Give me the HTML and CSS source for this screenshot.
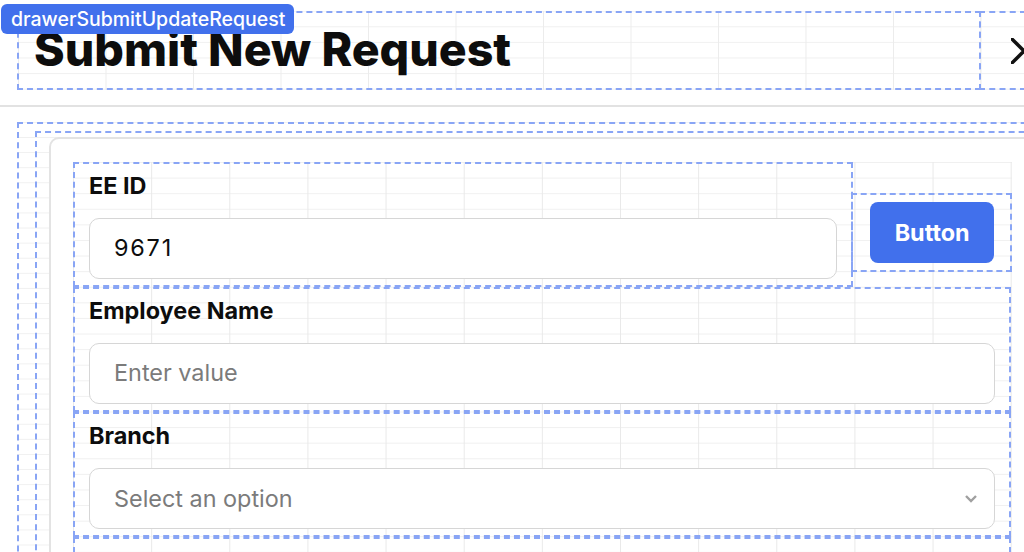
FILE: index.html
```html
<!DOCTYPE html>
<html lang="en">
<head>
    <meta charset="UTF-8">
    <title>Submit New Request</title>
    <link rel="stylesheet" href="styles.css">
</head>
<body>
    <div class="page">
        <div class="drawer-header">
            <div class="title-box">
                <h1>Submit New Request</h1>
            </div>
            <div class="close-box">
                <svg class="close-icon" width="26" height="26" viewBox="0 0 26 26">
                    <path d="M1 1 L25 25 M25 1 L1 25" stroke="#111" stroke-width="3.4" fill="none" stroke-linecap="square"/>
                </svg>
            </div>
            <span class="component-tag">drawerSubmitUpdateRequest</span>
        </div>

        <div class="drawer-body">
            <div class="outer-frame">
                <div class="inner-frame">
                    <div class="card">
                        <div class="grid">
                            <div class="row">
                                <div class="field field-short">
                                    <label>EE ID</label>
                                    <div class="input value">9671</div>
                                </div>
                                <div class="button-box">
                                    <button>Button</button>
                                </div>
                            </div>
                            <div class="field">
                                <label>Employee Name</label>
                                <div class="input placeholder">Enter value</div>
                            </div>
                            <div class="field">
                                <label>Branch</label>
                                <div class="input placeholder select">
                                    <span>Select an option</span>
                                    <svg class="chevron" width="14" height="9" viewBox="0 0 14 9">
                                        <path d="M2 2 L7 7 L12 2" stroke="#a0a0a0" stroke-width="2.4" fill="none"/>
                                    </svg>
                                </div>
                            </div>
                            <div class="field"></div>
                        </div>
                    </div>
                </div>
            </div>
        </div>
    </div>
</body>
</html>
```

FILE: styles.css
```css
* {
    box-sizing: border-box;
}
body {
    margin: 0;
    background-color: #fff;
    font-family: Inter, "Noto Sans", sans-serif;
    color: #0d0d0d;
}
.page {
    width: 1024px;
    height: 552px;
    overflow: hidden;
}
.drawer-header {
    position: relative;
    display: flex;
    height: 107px;
    padding: 11px 0 0 17px;
    border-bottom: 2px solid #e2e2e2;
}
.title-box,
.close-box {
    height: 79px;
    border: 2px dashed #89a5f5;
    background-image:
        linear-gradient(to right, #ececec 1px, transparent 1px),
        linear-gradient(to bottom, #f0f0f0 1px, transparent 1px);
    background-size: 87.5px 100%, 100% 15.6px;
    background-position: -1px 0, 0 13.3px;
}
.title-box {
    flex: 0 0 964px;
    padding: 13px 0 0 15px;
}
.title-box h1 {
    margin: 0;
    font-size: 46.5px;
    font-weight: 800;
    line-height: 1;
}
.close-box {
    flex: 0 0 88px;
    margin-left: -2px;
    display: flex;
    align-items: center;
    justify-content: center;
}
.close-icon {
    margin: 0 0 0 2px;
}
.component-tag {
    position: absolute;
    left: 1px;
    top: 4px;
    height: 30px;
    padding: 0 9px 0 10px;
    background-color: #4170ec;
    color: #fff;
    border-radius: 6px;
    font-size: 19.5px;
    font-weight: 500;
    line-height: 30px;
}
.drawer-body {
    padding: 15px 0 0 17px;
}
.outer-frame {
    width: 1100px;
    height: 500px;
    border: 2px dashed #89a5f5;
    padding: 7px 0 0 16px;
    background-image: linear-gradient(to bottom, #f0f0f0 1px, transparent 1px);
    background-size: 100% 15.1px;
    background-position: 0 13px;
}
.inner-frame {
    height: 500px;
    border: 2px dashed #89a5f5;
    border-right: none;
    padding: 4px 0 0 12px;
}
.card {
    height: 500px;
    border: 2px solid #e3e3e3;
    border-radius: 10px;
    background-color: #fff;
    padding: 23px 0 0 22px;
}
.grid {
    width: 939px;
    height: 420px;
    background-image:
        linear-gradient(to right, #e9e9e9 1px, transparent 1px),
        linear-gradient(to bottom, #f0f0f0 1px, transparent 1px);
    background-size: 78.15px 100%, 100% 15.6px;
}
.row {
    display: flex;
}
.field {
    width: 938px;
    height: 125px;
    border: 2px dashed #89a5f5;
    padding: 8px 14px 0 14px;
}
.field-short {
    width: 781px;
}
label {
    display: block;
    font-size: 23.4px;
    font-weight: 650;
    line-height: 28px;
    margin-bottom: 18px;
}
.input {
    height: 61px;
    border: 1.5px solid #d6d6d6;
    border-radius: 10px;
    background-color: #fff;
    padding-left: 24px;
    font-size: 23.4px;
    line-height: 58px;
}
.value {
    letter-spacing: 1.8px;
}
.placeholder {
    color: #7b7b7b;
}
.select {
    display: flex;
    justify-content: space-between;
    align-items: center;
    padding-right: 16px;
}
.button-box {
    width: 161px;
    height: 79px;
    margin-top: 31px;
    margin-left: -2px;
    border: 2px dashed #89a5f5;
    padding: 7px 0 0 17px;
}
button {
    width: 124px;
    height: 61px;
    border: none;
    border-radius: 8px;
    background-color: #4170ec;
    color: #fff;
    font-family: Inter, "Noto Sans", sans-serif;
    font-size: 23.4px;
    font-weight: 650;
    cursor: pointer;
}
```
